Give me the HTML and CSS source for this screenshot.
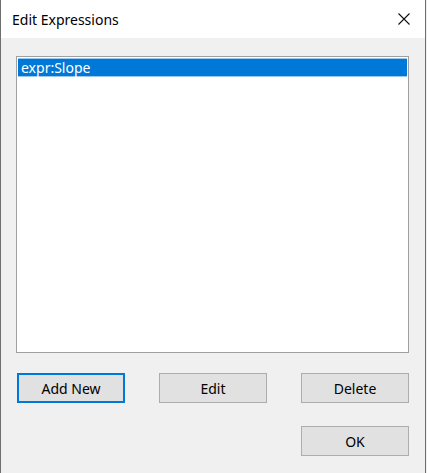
FILE: index.html
```html
<!DOCTYPE html>
<html>
<head>
<meta charset="utf-8">
<link rel="stylesheet" href="styles.css">
</head>
<body>
<div class="window">
  <div class="titlebar">
    <span class="title">Edit Expressions</span>
    <svg class="close" width="12" height="12" viewBox="0 0 12 12"><path d="M0.5 0.5 L11.5 11.5 M11.5 0.5 L0.5 11.5" stroke="#111" stroke-width="1.1" fill="none"/></svg>
  </div>
  <div class="content">
    <div class="listbox">
      <div class="item selected">expr:Slope</div>
    </div>
    <div class="row">
      <button class="btn default">Add New</button>
      <button class="btn">Edit</button>
      <button class="btn">Delete</button>
    </div>
    <div class="row end">
      <button class="btn">OK</button>
    </div>
  </div>
</div>
</body>
</html>
```
FILE: styles.css
```css
html, body {
  margin: 0;
  padding: 0;
  background: #f0f0f0;
}
body {
  font-family: "Noto Sans", "Open Sans", sans-serif;
  font-size: 14px;
  color: #000;
}
.window {
  box-sizing: border-box;
  width: 426px;
  height: 473px;
  border-left: 1px solid #6f6f6f;
  border-right: 1px solid #6f6f6f;
  background: #f0f0f0;
  display: flex;
  flex-direction: column;
}
.titlebar {
  height: 38px;
  background: #fff;
  display: flex;
  align-items: center;
  justify-content: space-between;
  padding: 0 15px 0 11px;
  flex: none;
}
.title {
  font-size: 14px;
  color: #000;
}
.close {
  display: block;
}
.content {
  padding: 18px 16px 0 15px;
  display: flex;
  flex-direction: column;
}
.listbox {
  box-sizing: border-box;
  height: 297px;
  border: 1px solid #a0a0a0;
  background: #fff;
  padding: 1px;
}
.item {
  height: 19px;
  line-height: 17px;
  padding-left: 4px;
  box-sizing: border-box;
}
.item.selected {
  background: #0078d7;
  color: #fff;
  border: 1px solid #99c9ef;
  border-width: 1px 0 1px 0;
  padding-left: 3px;
}
.row {
  display: flex;
  justify-content: space-between;
  padding-left: 1px;
  margin-top: 20px;
}
.row.end {
  justify-content: flex-end;
  margin-top: 23px;
}
.btn {
  box-sizing: border-box;
  width: 108px;
  height: 30px;
  background: #e1e1e1;
  border: 1px solid #adadad;
  font-family: "Noto Sans", "Open Sans", sans-serif;
  font-size: 14px;
  color: #000;
  padding: 0;
  margin: 0;
}
.btn.default {
  border: 2px solid #0078d7;
}
```
